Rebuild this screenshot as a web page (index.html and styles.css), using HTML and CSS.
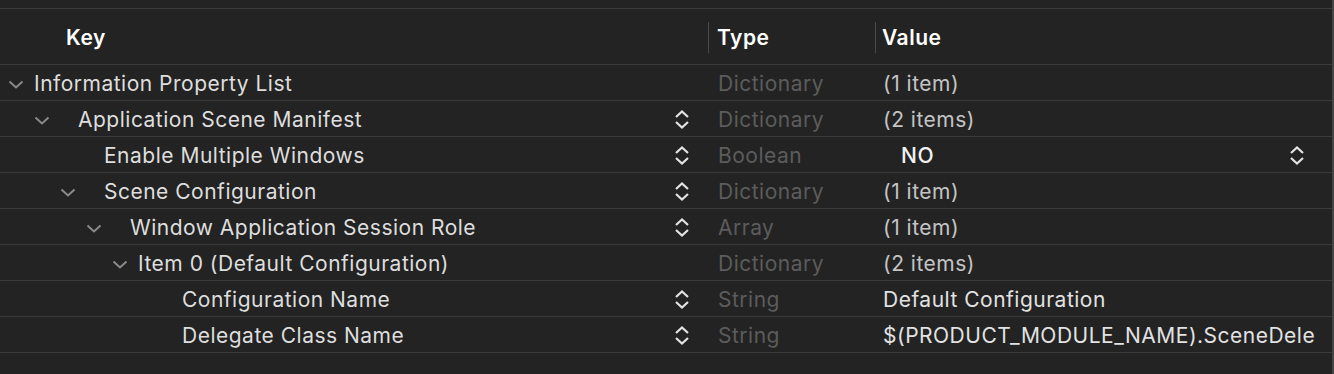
FILE: index.html
```html
<!DOCTYPE html>
<html lang="en">
<head>
    <meta charset="UTF-8">
    <title>Info.plist</title>
    <link rel="stylesheet" href="styles.css">
</head>
<body>
    <div class="plist">
        <div class="header">
            <div class="col-key">Key</div>
            <div class="col-type"><span class="sep"></span>Type</div>
            <div class="col-value"><span class="sep"></span>Value</div>
        </div>

        <div class="row">
            <div class="key lv0">
                <span class="twisty"><svg width="16" height="9" viewBox="0 0 16 9"><path d="M1.5 1.5 L8 7.5 L14.5 1.5" fill="none" stroke="#8a8a8a" stroke-width="2"/></svg></span>
                <span class="name">Information Property List</span>
            </div>
            <div class="type">Dictionary</div>
            <div class="value dim">(1 item)</div>
        </div>

        <div class="row">
            <div class="key lv1">
                <span class="twisty"><svg width="16" height="9" viewBox="0 0 16 9"><path d="M1.5 1.5 L8 7.5 L14.5 1.5" fill="none" stroke="#8a8a8a" stroke-width="2"/></svg></span>
                <span class="name editable">Application Scene Manifest</span>
                <span class="stepper"><svg width="16" height="21" viewBox="0 0 16 21"><path d="M2 8 L8 2.5 L14 8 M2 13 L8 18.5 L14 13" fill="none" stroke="#e4e4e4" stroke-width="2.2"/></svg></span>
            </div>
            <div class="type">Dictionary</div>
            <div class="value dim">(2 items)</div>
        </div>

        <div class="row">
            <div class="key lv2">
                <span class="twisty"></span>
                <span class="name editable">Enable Multiple Windows</span>
                <span class="stepper"><svg width="16" height="21" viewBox="0 0 16 21"><path d="M2 8 L8 2.5 L14 8 M2 13 L8 18.5 L14 13" fill="none" stroke="#e4e4e4" stroke-width="2.2"/></svg></span>
            </div>
            <div class="type">Boolean</div>
            <div class="value">
                <span class="popup">NO</span>
                <span class="stepper value-stepper"><svg width="16" height="21" viewBox="0 0 16 21"><path d="M2 8 L8 2.5 L14 8 M2 13 L8 18.5 L14 13" fill="none" stroke="#e4e4e4" stroke-width="2.2"/></svg></span>
            </div>
        </div>

        <div class="row">
            <div class="key lv2">
                <span class="twisty"><svg width="16" height="9" viewBox="0 0 16 9"><path d="M1.5 1.5 L8 7.5 L14.5 1.5" fill="none" stroke="#8a8a8a" stroke-width="2"/></svg></span>
                <span class="name editable">Scene Configuration</span>
                <span class="stepper"><svg width="16" height="21" viewBox="0 0 16 21"><path d="M2 8 L8 2.5 L14 8 M2 13 L8 18.5 L14 13" fill="none" stroke="#e4e4e4" stroke-width="2.2"/></svg></span>
            </div>
            <div class="type">Dictionary</div>
            <div class="value dim">(1 item)</div>
        </div>

        <div class="row">
            <div class="key lv3">
                <span class="twisty"><svg width="16" height="9" viewBox="0 0 16 9"><path d="M1.5 1.5 L8 7.5 L14.5 1.5" fill="none" stroke="#8a8a8a" stroke-width="2"/></svg></span>
                <span class="name editable">Window Application Session Role</span>
                <span class="stepper"><svg width="16" height="21" viewBox="0 0 16 21"><path d="M2 8 L8 2.5 L14 8 M2 13 L8 18.5 L14 13" fill="none" stroke="#e4e4e4" stroke-width="2.2"/></svg></span>
            </div>
            <div class="type">Array</div>
            <div class="value dim">(1 item)</div>
        </div>

        <div class="row">
            <div class="key lv4">
                <span class="twisty"><svg width="16" height="9" viewBox="0 0 16 9"><path d="M1.5 1.5 L8 7.5 L14.5 1.5" fill="none" stroke="#8a8a8a" stroke-width="2"/></svg></span>
                <span class="name">Item 0 (Default Configuration)</span>
            </div>
            <div class="type">Dictionary</div>
            <div class="value dim">(2 items)</div>
        </div>

        <div class="row">
            <div class="key lv5">
                <span class="twisty"></span>
                <span class="name editable">Configuration Name</span>
                <span class="stepper"><svg width="16" height="21" viewBox="0 0 16 21"><path d="M2 8 L8 2.5 L14 8 M2 13 L8 18.5 L14 13" fill="none" stroke="#e4e4e4" stroke-width="2.2"/></svg></span>
            </div>
            <div class="type">String</div>
            <div class="value"><span class="clip">Default Configuration</span></div>
        </div>

        <div class="row">
            <div class="key lv5">
                <span class="twisty"></span>
                <span class="name editable">Delegate Class Name</span>
                <span class="stepper"><svg width="16" height="21" viewBox="0 0 16 21"><path d="M2 8 L8 2.5 L14 8 M2 13 L8 18.5 L14 13" fill="none" stroke="#e4e4e4" stroke-width="2.2"/></svg></span>
            </div>
            <div class="type">String</div>
            <div class="value"><span class="clip">$(PRODUCT_MODULE_NAME).SceneDele</span></div>
        </div>
    </div>
</body>
</html>
```

FILE: styles.css
```css
* {
    margin: 0;
    padding: 0;
    box-sizing: border-box;
}
body {
    background-color: #232323;
    color: #dedede;
    font-family: Inter, "Noto Sans", sans-serif;
    font-size: 21px;
    letter-spacing: 0.5px;
}
.plist {
    width: 1334px;
    height: 374px;
    padding-top: 8px;
    border-right: 2px solid #454545;
}
.header {
    display: grid;
    grid-template-columns: 708px 167px 1fr;
    height: 57px;
    border-top: 1px solid #3a3a3a;
    border-bottom: 1px solid #3a3a3a;
    color: #fff;
    font-weight: 600;
}
.header > div {
    display: flex;
    align-items: center;
    padding-top: 2px;
}
.col-key {
    padding-left: 66px;
}
.sep {
    width: 1px;
    height: 31px;
    background: #4a4a4a;
    margin-right: 8px;
}
.col-value .sep {
    margin-right: 6px;
}
.row {
    display: grid;
    grid-template-columns: 708px 167px 1fr;
    height: 36px;
    border-bottom: 1px solid #3a3a3a;
}
.row > div {
    display: flex;
    align-items: center;
    white-space: nowrap;
    min-width: 0;
    padding-top: 1px;
}
.lv0 { padding-left: 8px; }
.lv1 { padding-left: 34px; }
.lv2 { padding-left: 60px; }
.lv3 { padding-left: 86px; }
.lv4 { padding-left: 112px; }
.lv5 { padding-left: 138px; }
.twisty {
    width: 26px;
    flex: none;
    display: flex;
    align-items: center;
    padding-top: 3px;
}
.name.editable {
    margin-left: 18px;
}
.stepper {
    margin-left: auto;
    margin-right: 18px;
    display: flex;
    padding-top: 1px;
}
.type {
    padding-left: 10px;
    color: #5c5c5c;
}
.value {
    padding-left: 8px;
    padding-right: 10px;
    color: #e2e2e2;
}
.value.dim {
    color: #c4c4c4;
}
.popup {
    margin-left: 18px;
    color: #f2f2f2;
    font-weight: 500;
}
.value-stepper {
    margin-right: 17px;
}
.clip {
    display: block;
    overflow: hidden;
}
```
